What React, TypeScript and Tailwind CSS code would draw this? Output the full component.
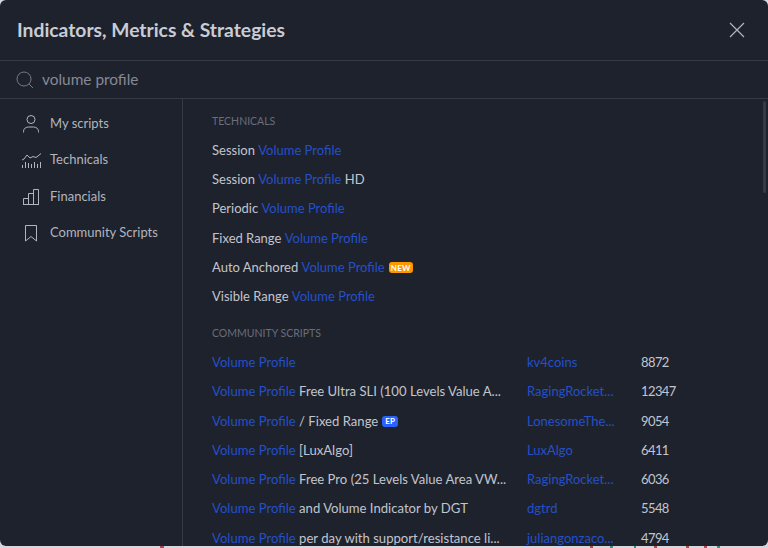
const badgeBase = "inline-flex items-center justify-center rounded-[3px] text-[8px] font-bold leading-none h-[11px] text-white ml-[4px] tracking-[0.3px]";

const technicals: [string, string, string?][] = [
  ["Session ", "", undefined],
  ["Session ", " HD", undefined],
  ["Periodic ", "", undefined],
  ["Fixed Range ", "", undefined],
  ["Auto Anchored ", "", "new"],
  ["Visible Range ", "", undefined],
];

const community: { after: string; badge?: boolean; author: string; n: string }[] = [
  { after: "", author: "kv4coins", n: "8872" },
  { after: " Free Ultra SLI (100 Levels Value A...", author: "RagingRocket...", n: "12347" },
  { after: " / Fixed Range", badge: true, author: "LonesomeThe...", n: "9054" },
  { after: " [LuxAlgo]", author: "LuxAlgo", n: "6411" },
  { after: " Free Pro (25 Levels Value Area VW...", author: "RagingRocket...", n: "6036" },
  { after: " and Volume Indicator by DGT", author: "dgtrd", n: "5548" },
  { after: " per day with support/resistance li...", author: "juliangonzaco...", n: "4794" },
];

function Blue({ children }: { children: React.ReactNode }) {
  return <span className="text-[#2450c8]">{children}</span>;
}

const nav = [
  {
    label: "My scripts",
    icon: (
      <svg width="28" height="28" viewBox="0 0 28 28" fill="none" stroke="currentColor" strokeWidth="1">
        <circle cx="14" cy="9.5" r="4" />
        <path d="M6.5 22.5v-1c0-3 2.5-4.5 5-4.5h5c2.500 0 5 1.500 5 4.500v1" />
      </svg>
    ),
  },
  {
    label: "Technicals",
    icon: (
      <svg width="28" height="28" viewBox="0 0 28 28" fill="none" stroke="currentColor" strokeWidth="1">
        <path d="M5 14l2-1 3-4 3 3 3-1.500 3 1 2-1.500 3-2.500" />
        <path d="M5.500 22v-3M8.500 22v-6M11.500 22v-5M14.500 22v-4M17.500 22v-6M20.500 22v-4M23.500 22v-6" />
      </svg>
    ),
  },
  {
    label: "Financials",
    icon: (
      <svg width="28" height="28" viewBox="0 0 28 28" fill="none" stroke="currentColor" strokeWidth="1">
        <path d="M6.500 22.500v-6h5v6M11.500 22.500v-11h5v11M16.500 22.500v-15h5v15M6 22.500h16" />
      </svg>
    ),
  },
  {
    label: "Community Scripts",
    icon: (
      <svg width="28" height="28" viewBox="0 0 28 28" fill="none" stroke="currentColor" strokeWidth="1">
        <path d="M8.500 6.500h11v15.500l-5.500-4.500-5.500 4.500z" />
      </svg>
    ),
  },
];

export default function App() {
  return (
    <div className="w-[768px] h-[548px] overflow-hidden bg-[#d6d7da]">
      <div className="w-[768px] h-[546px] overflow-hidden rounded-[6px] bg-[#1e222d] flex flex-col font-['Lato',sans-serif] text-[13px] text-[#c2c5ce]">
        <div className="h-[60px] flex items-center justify-between pl-[17px] pr-[22px] shrink-0">
          <h1 className="text-[19.3px] font-bold text-[#c9ccd4]">Indicators, Metrics &amp; Strategies</h1>
          <svg width="18" height="18" viewBox="0 0 18 18" stroke="#b2b5be" strokeWidth="1.200" fill="none">
            <path d="M2 2l14 14M16 2L2 16" />
          </svg>
        </div>
        <div className="h-[39px] shrink-0 border-y border-[#363a45] flex items-center pl-[16px] gap-[8px] text-[15.4px] text-[#868993]">
          <svg width="18" height="18" viewBox="0 0 18 18" fill="none" stroke="#787b86" strokeWidth="1">
            <circle cx="8" cy="8" r="7" />
            <path d="M13 13l4 4" />
          </svg>
          <span>volume profile</span>
        </div>
        <div className="flex-1 min-h-0 flex">
          <div className="w-[183px] shrink-0 border-r border-[#363a45] pt-[6.500px] pl-[17px]">
            {nav.map((n) => (
              <div key={n.label} className="h-[36.400px] flex items-center gap-[5px] text-[#b2b5be]">
                {n.icon}
                <span>{n.label}</span>
              </div>
            ))}
          </div>
          <div className="flex-1 relative pl-[29px] pt-[14.500px]">
            <div className="h-[16px] flex items-center text-[10.500px] text-[#6a6d78]">TECHNICALS</div>
            <div className="mt-[6.500px]">
              {technicals.map(([a, b, badge], i) => (
                <div key={i} className="h-[29.300px] flex items-center whitespace-pre">
                  <span>{a}</span>
                  <Blue>Volume Profile</Blue>
                  <span>{b}</span>
                  {badge && <span className={`${badgeBase} w-[24px] bg-[#ff9800]`}>NEW</span>}
                </div>
              ))}
            </div>
            <div className="mt-[14px] h-[16px] flex items-center text-[10.500px] text-[#6a6d78]">COMMUNITY SCRIPTS</div>
            <div className="mt-[6.300px]">
              {community.map((r, i) => (
                <div key={i} className="h-[29.300px] flex items-center whitespace-pre">
                  <div className="w-[315px] flex items-center text-[13.100px]">
                    <Blue>Volume Profile</Blue>
                    <span>{r.after}</span>
                    {r.badge && <span className={`${badgeBase} w-[16px] bg-[#2962ff]`}>EP</span>}
                  </div>
                  <div className="w-[114px]"><Blue>{r.author}</Blue></div>
                  <div className="tracking-[-0.6px]">{r.n}</div>
                </div>
              ))}
            </div>
            <div className="absolute right-[2px] top-[2px] w-[3px] h-[92px] bg-[#363a45] rounded-full" />
          </div>
        </div>
      </div>
      <svg width="768" height="2" className="block">
        <rect x="160" width="4" height="2" fill="#b5475a" />
        <rect x="590" width="3" height="2" fill="#b5475a" />
        <rect x="610" width="3" height="2" fill="#3f8f7f" />
        <rect x="634" width="2" height="2" fill="#3f8f7f" />
        <rect x="654" width="3" height="2" fill="#b5475a" />
        <rect x="686" width="3" height="2" fill="#b5475a" />
        <rect x="704" width="3" height="2" fill="#b5475a" />
        <rect x="717" width="3" height="2" fill="#3f8f7f" />
      </svg>
    </div>
  );
}
